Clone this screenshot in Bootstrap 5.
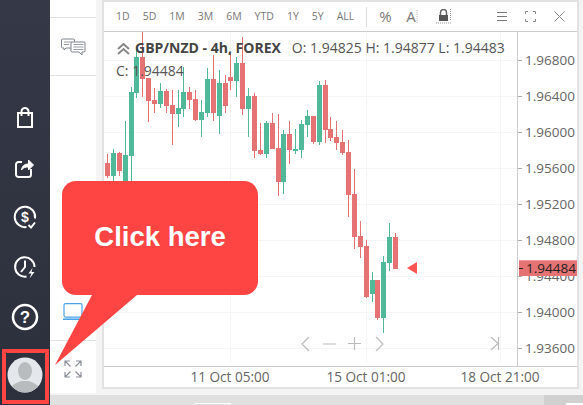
<!DOCTYPE html>
<html lang="en">
  <head>
    <meta charset="UTF-8" />
    <meta name="viewport" content="width=device-width, initial-scale=1.0" />
    <title>GBP/NZD chart</title>
    <link
      href="https://cdn.jsdelivr.net/npm/bootstrap@5.3.3/dist/css/bootstrap.min.css"
      rel="stylesheet"
    />
    <style>
      body {
        height: 405px;
        overflow: hidden;
        font-family: "Open Sans", sans-serif;
        color: #666;
        background: #fff;
      }

      .side-rail {
        width: 50px;
        background: linear-gradient(#353947, #2c303c);
        padding-bottom: 1px;
      }

      .rail-btn {
        height: 50px;
      }

      .rail-user {
        width: 47px;
        height: 55px;
        margin-top: 7px;
        padding-bottom: 3px;
        border: 4px solid #ff4444;
      }

      .main-wrap {
        background: #f4f4f4;
      }

      .tool-col {
        width: 46px;
        background: #fff;
      }

      .tool-top {
        height: 18px;
        border-bottom: 1px solid #e3e3e3;
      }

      .tool-chat {
        height: 58px;
        border-bottom: 1px solid #e3e3e3;
      }

      .tool-laptop {
        padding-bottom: 20px;
      }

      .tool-expand {
        height: 53px;
        padding-top: 19px;
        border-top: 1px solid #e3e3e3;
      }

      .gutter {
        width: 6px;
      }

      .chart-panel {
        width: 477px;
        background: #fff;
        border: 2px solid #e2e2e2;
        margin-right: 4px;
        margin-bottom: 4px;
      }

      .chart-tools {
        height: 30px;
        padding-left: 12px;
        border-bottom: 1px solid #ccc;
        font-size: 10.5px;
        color: #777;
      }

      .range-list {
        gap: 13px;
      }

      .tools-sep {
        width: 1px;
        height: 20px;
        margin: 0 12px;
        background: #ddd;
      }

      .tool-pct {
        font-size: 15px;
        line-height: 1;
        width: 27px;
      }

      .tool-font {
        font-size: 15px;
        line-height: 1;
        width: 30px;
      }

      .tool-lock {
        width: 61px;
      }

      .tool-menu {
        width: 28px;
      }

      .tool-max {
        width: 29px;
      }

      .plot-wrap {
        width: 413px;
      }

      .plot-svg {
        display: block;
      }

      .legend-box {
        position: absolute;
        top: 4px;
        left: 12px;
        width: 400px;
        font-size: 14px;
        line-height: 23px;
        color: #555;
      }

      .legend-box b {
        color: #444;
        margin-right: 11px;
      }

      .legend-arrows {
        margin: 0 5px 0 1px;
      }

      .price-axis {
        width: 60px;
        border-left: 1px solid #ccc;
        padding-top: 10px;
        font-size: 13.5px;
        color: #666;
        overflow: hidden;
      }

      .price-row {
        height: 36px;
      }

      .price-row::before {
        content: "";
        width: 4px;
        height: 1px;
        background: #aaa;
        margin-right: 3px;
      }

      .price-tag {
        position: absolute;
        top: 228px;
        left: 1px;
        right: 0;
        height: 16px;
        background: #e57373;
        color: #222;
        border-top: 1px solid #ec9a9a;
      }

      .price-tag::before {
        background: #222;
      }

      .time-axis {
        height: 21px;
        border-top: 1px solid #ccc;
        padding-left: 58px;
        font-size: 13.6px;
        color: #666;
      }

      .time-cell {
        width: 136px;
      }

      .time-cell:last-child {
        width: 132px;
      }

      .bottom-strip {
        height: 15px;
      }

      .strip-bar {
        height: 13px;
        margin-top: 2px;
        background: #e0e0e0;
      }

      .strip-grip {
        width: 36px;
        height: 4px;
        margin-left: 145px;
        border-top: 1px solid #fff;
        border-bottom: 1px solid #fff;
      }

      .strip-thumb {
        width: 39px;
        background: #d0d0d0;
        padding-left: 22px;
      }

      .strip-thumb i {
        display: block;
        height: 3px;
        background: #fff;
      }

      .call-out {
        position: absolute;
        left: 62px;
        top: 181px;
        width: 196px;
        height: 114px;
        padding-bottom: 2px;
        background: #ff4444;
        border-radius: 14px;
        color: #fff;
        font: bold 27.5px "Liberation Sans", Arial, sans-serif;
      }

      .call-tail {
        position: absolute;
        left: 50px;
        top: 290px;
        pointer-events: none;
      }
    </style>
  </head>

  <body class="d-flex">
    <aside class="side-rail d-flex flex-column align-items-center justify-content-end flex-shrink-0">
      <div class="rail-btn d-flex align-items-center justify-content-center">
        <svg width="18" height="21" viewBox="0 0 18 21" fill="none" stroke="#fff" stroke-width="2">
          <path d="M2 6h14v14H2z" />
          <path d="M5.500 9V4.500a3.500 3.500 0 0 1 7 0V9" />
        </svg>
      </div>
      <div class="rail-btn d-flex align-items-center justify-content-center">
        <svg width="20" height="21" viewBox="0 0 20 21" fill="none" stroke="#fff" stroke-width="2">
          <path d="M7 5H3.500A2.500 2.500 0 0 0 1 7.500v10A2.500 2.500 0 0 0 3.500 20h10a2.500 2.500 0 0 0 2.500-2.500V12" />
          <path d="M6.500 13c.5-4 3-6 7-6V3l5 5-5 5V10c-3 0-5.500 .5-7 3z" fill="#fff" stroke-width="1" />
        </svg>
      </div>
      <div class="rail-btn d-flex align-items-center justify-content-center">
        <svg width="24" height="24" viewBox="0 0 24 24" fill="none" stroke="#fff" stroke-width="2">
          <path d="M13.500 22A10.200 10.200 0 1 1 22 13.500" />
          <path d="M15.500 20l2.500 2.500 4-5" />
          <text x="12" y="17" text-anchor="middle" font-family="Liberation Sans, sans-serif" font-size="14" font-weight="700" fill="#fff" stroke="none">$</text>
        </svg>
      </div>
      <div class="rail-btn d-flex align-items-center justify-content-center">
        <svg width="24" height="24" viewBox="0 0 24 24" fill="none" stroke="#fff" stroke-width="2">
          <path d="M13.500 21.500A9.700 9.700 0 1 1 21.500 12" />
          <path d="M12 5.500V12l-4 5" />
          <path d="M19.500 13l-4 5.500h3l-2 5 5-6.500h-3z" fill="#fff" stroke="none" />
        </svg>
      </div>
      <div class="rail-btn d-flex align-items-center justify-content-center">
        <svg width="28" height="28" viewBox="0 0 28 28" fill="none" stroke="#fff" stroke-width="2.500">
          <circle cx="14" cy="14" r="12" />
          <text x="14" y="20" text-anchor="middle" font-family="Liberation Sans, sans-serif" font-size="17" font-weight="700" fill="#fff" stroke="none">?</text>
        </svg>
      </div>
      <div class="rail-user d-flex align-items-center justify-content-center">
        <svg width="36" height="36" viewBox="0 0 36 36">
          <defs>
            <clipPath id="avatarClip"><circle cx="18" cy="18" r="17.500" /></clipPath>
          </defs>
          <g clip-path="url(#avatarClip)">
            <rect width="36" height="36" fill="#e4e8ec" />
            <ellipse cx="18" cy="14" rx="7" ry="9" fill="#b9bcbf" />
            <path d="M2 36c0-8 8-10 12-12h8c4 2 12 4 12 12z" fill="#b9bcbf" />
          </g>
        </svg>
      </div>
    </aside>

    <div class="main-wrap d-flex flex-column flex-grow-1">
      <div class="d-flex flex-grow-1">
        <div class="tool-col d-flex flex-column flex-shrink-0">
          <div class="tool-top"></div>
          <div class="tool-chat d-flex align-items-center justify-content-center">
            <svg width="25" height="18" viewBox="0 0 25 18" fill="#fff" stroke="#7f8590" stroke-width="1">
              <path d="M1.500 1h11a1 1 0 0 1 1 1v7a1 1 0 0 1-1 1H5l-2 2v-2H1.500a1 1 0 0 1-1-1V2a1 1 0 0 1 1-1z" />
              <path d="M3 4h8M3 6.500h5" stroke-width=".8" />
              <path d="M11 4h12a1 1 0 0 1 1 1v8a1 1 0 0 1-1 1h-2v3l-3-3h-7a1 1 0 0 1-1-1V5a1 1 0 0 1 1-1z" />
              <path d="M12.500 6.500h10M12.500 9h10M12.500 11.500h10" stroke-width=".8" />
            </svg>
          </div>
          <div class="tool-laptop flex-grow-1 d-flex align-items-end justify-content-center">
            <svg width="20" height="17" viewBox="0 0 20 17" fill="none" stroke="#4aa3ea" stroke-width="1.200">
              <rect x="1" y=".6" width="18" height="13.500" rx="1.500" />
              <path d="M0 16.200h20" stroke-width="1.600" />
            </svg>
          </div>
          <div class="tool-expand d-flex justify-content-center">
            <svg width="18" height="18" viewBox="0 0 18 18" fill="none" stroke="#8a8f98" stroke-width="1.200">
              <path d="M1 6V1h5M1 1l5.500 5.500M12 1h5v5M17 1l-5.500 5.500M1 12v5h5M1 17l5.500-5.500M17 12v5h-5M17 17l-5.500-5.500" />
            </svg>
          </div>
        </div>
        <div class="gutter flex-shrink-0"></div>

        <section class="chart-panel d-flex flex-column flex-shrink-0">
          <div class="chart-tools d-flex align-items-center">
            <div class="range-list d-flex">
              <span>1D</span>
              <span>5D</span>
              <span>1M</span>
              <span>3M</span>
              <span>6M</span>
              <span>YTD</span>
              <span>1Y</span>
              <span>5Y</span>
              <span>ALL</span>
            </div>
            <div class="tools-sep"></div>
            <span class="tool-pct">%</span>
            <span class="tool-font d-flex align-items-center">
              A<svg width="2" height="14" viewBox="0 0 2 14"><path d="M1 0v14" stroke="#aaa" stroke-dasharray="1 1" /></svg>
            </span>
            <div class="tool-lock">
              <svg width="16" height="15" viewBox="0 0 16 15" fill="none" stroke="#666">
                <path d="M4.500 6V3.500a3 3 0 0 1 6 0V6" stroke-width="1.500" />
                <rect x="3" y="6" width="9" height="6" fill="#555" stroke="none" />
                <path d="M0 14h16M14.500 0v12" stroke="#999" stroke-dasharray="1 1" />
              </svg>
            </div>
            <div class="tool-menu">
              <svg class="d-block" width="10" height="9" viewBox="0 0 10 9" stroke="#777">
                <path d="M0 .5h10M0 4.500h10M0 8.500h10" />
              </svg>
            </div>
            <div class="tool-max">
              <svg class="d-block" width="11" height="11" viewBox="0 0 11 11" fill="none" stroke="#888">
                <path d="M.5 3V.5H3M8 .5h2.500V3M.5 8v2.500H3M8 10.500h2.500V8" />
              </svg>
            </div>
            <svg width="11" height="11" viewBox="0 0 11 11" stroke="#888">
              <path d="M.5 .5l10 10M10.500 .5l-10 10" />
            </svg>
          </div>

          <div class="d-flex flex-grow-1">
            <div class="plot-wrap position-relative">
              <svg id="plot" class="plot-svg" width="413" height="331" viewBox="104 32 413 331"></svg>
              <div class="legend-box">
                <div class="text-nowrap">
                  <svg class="legend-arrows" width="13" height="12" viewBox="0 0 13 12" fill="none" stroke="#888" stroke-width="2">
                    <path d="M1 6l5.500-5 5.500 5M1 11l5.500-5 5.500 5" />
                  </svg><b>GBP/NZD - 4h, FOREX</b>O: 1.94825 H: 1.94877 L: 1.94483
                </div>
                <div>C: 1.94484</div>
              </div>
            </div>
            <div class="price-axis position-relative d-flex flex-column">
              <div class="price-row d-flex align-items-center">1.96800</div>
              <div class="price-row d-flex align-items-center">1.96400</div>
              <div class="price-row d-flex align-items-center">1.96000</div>
              <div class="price-row d-flex align-items-center">1.95600</div>
              <div class="price-row d-flex align-items-center">1.95200</div>
              <div class="price-row d-flex align-items-center">1.94800</div>
              <div class="price-row d-flex align-items-center">1.94400</div>
              <div class="price-row d-flex align-items-center">1.94000</div>
              <div class="price-row d-flex align-items-center">1.93600</div>
              <div class="price-row price-tag d-flex align-items-center">1.94484</div>
            </div>
          </div>

          <div class="time-axis d-flex align-items-center text-nowrap">
            <span class="time-cell text-center">11 Oct 05:00</span>
            <span class="time-cell text-center">15 Oct 01:00</span>
            <span class="time-cell text-center">18 Oct 21:00</span>
          </div>
        </section>
      </div>

      <div class="bottom-strip flex-shrink-0">
        <div class="strip-bar d-flex justify-content-between">
          <div class="strip-grip mt-2"></div>
          <div class="strip-thumb pt-2"><i></i></div>
        </div>
      </div>
    </div>

    <div class="call-out d-flex align-items-center justify-content-center">Click here</div>
    <svg class="call-tail" width="100" height="80" viewBox="50 290 100 80">
      <path d="M90 290L92 295L55 365L137 295V290z" fill="#ff4444" />
    </svg>

    <script src="https://cdn.jsdelivr.net/npm/bootstrap@5.3.3/dist/js/bootstrap.bundle.min.js"></script>
    <script>
      // [color, wick top, body top, body bottom, wick bottom], read off left to right
      const candles = [
        ["r",154,163,176,178],["g",149,153,176,181],["r",152,153,171,176],["g",121,155,182,182],
        ["g",87,92,156,182],["g",47,57,93,98],["r",32,57,79,97],["r",78,78,101,122],
        ["r",88,100,104,113],["g",83,91,104,108],["r",89,91,106,113],["r",90,105,114,145],
        ["g",90,108,114,127],["g",67,92,109,117],["r",87,92,100,109],["r",90,99,120,121],
        ["g",100,112,120,137],["g",68,79,113,117],["r",55,79,113,121],["g",70,83,116,134],
        ["r",75,83,106,113],["r",53,77,81,90],["g",57,63,81,97],["r",37,63,109,115],
        ["g",88,96,109,137],["r",93,96,151,158],["r",123,150,154,155],["g",121,123,154,158],
        ["r",113,123,149,149],["r",114,148,182,196],["g",130,134,182,194],["r",121,134,150,164],
        ["g",129,149,151,154],["g",120,124,150,158],["g",110,116,125,137],["r",116,116,142,144],
        ["g",81,85,142,145],["r",80,85,130,143],["r",117,129,138,141],["r",121,137,143,150],
        ["r",130,142,153,155],["r",140,152,195,217],["r",169,194,237,249],["r",221,236,247,258],
        ["r",240,246,297,298],["g",272,280,294,302],["r",280,280,318,320],["g",256,262,318,333],
        ["g",223,237,263,271],["r",233,237,269,269],
      ];
      const colors = { r: "#e57373", g: "#4fb99a" };
      let svg = "";

      [60, 96, 132, 168, 204, 240, 276, 312, 348].forEach((y) => {
        svg += `<path d="M104 ${y}.5H517" stroke="#f5f5f5" />`;
      });
      [230, 366, 500].forEach((x) => {
        svg += `<path d="M${x}.5 32V363" stroke="#f5f5f5" />`;
      });

      candles.forEach((c, i) => {
        const x = Math.round(107 + i * 5.88);
        svg += `<rect x="${x}" y="${c[1]}" width="1" height="${c[4] - c[1]}" fill="${colors[c[0]]}" />`;
        svg += `<rect x="${x - 2}" y="${c[2]}" width="5" height="${c[3] - c[2]}" fill="${colors[c[0]]}" />`;
      });

      svg += `<polygon points="407,268 417,262 417,274" fill="#f55" />`;
      svg += `<g fill="none" stroke="#bbb" stroke-width="1.2">
        <path d="M309 337l-7 7 7 7M323 344h13M348 343.500h13M354.500 337v13M376 337l7 7-7 7M491 337l7 6.500-7 6.500M498.500 337v13" />
      </g>`;
      document.getElementById("plot").innerHTML = svg;
    </script>
  </body>
</html>
